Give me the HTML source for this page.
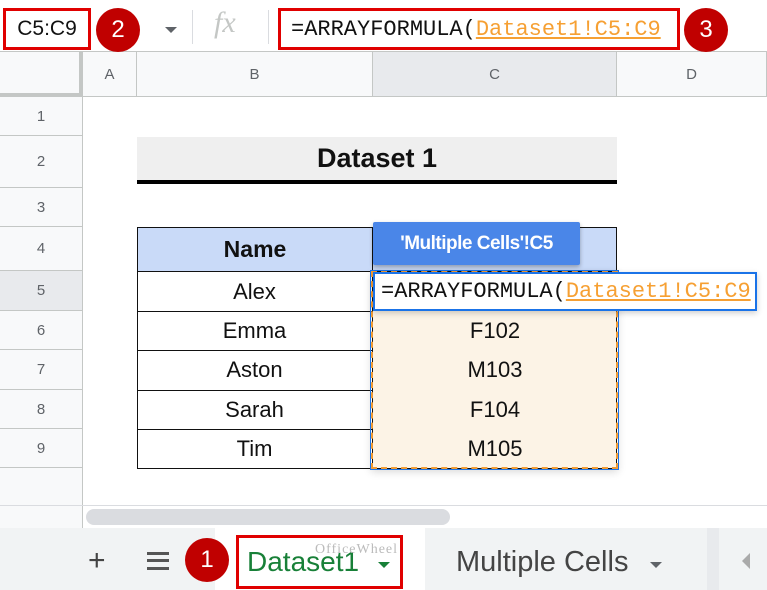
<!DOCTYPE html>
<html><head><style>
*{margin:0;padding:0;box-sizing:border-box}
body{width:767px;height:590px;position:relative;overflow:hidden;background:#fff;font-family:"Liberation Sans",Arial,sans-serif}
.a{position:absolute}
.rh{position:absolute;left:0;width:83px;background:#f8f9fa;border-bottom:1px solid #c4c7c5;border-right:1px solid #c4c7c5;color:#5f6368;font-size:15px;display:flex;align-items:center;justify-content:center}
.ch{position:absolute;top:52px;height:45px;background:#f8f9fa;border-right:1px solid #c4c7c5;border-bottom:1px solid #c4c7c5;color:#5f6368;font-size:15px;display:flex;align-items:center;justify-content:center}
.circ{position:absolute;width:44px;height:44px;border-radius:50%;background:#c00000;color:#fff;font-size:24px;display:flex;align-items:center;justify-content:center}
.cell{position:absolute;display:flex;align-items:center;justify-content:center;font-size:22px;color:#111}
.mono{font-family:"Liberation Mono",monospace}
</style></head><body>
<!-- toolbar -->
<div class="a" style="left:0;top:0;width:767px;height:52px;background:#fff;border-bottom:1px solid #c4c7c5"></div>
<div class="a" style="left:3px;top:8px;width:88px;height:42px;border:3px solid #e00000;font-size:21px;color:#111;display:flex;align-items:center;justify-content:center">C5:C9</div>
<div class="circ" style="left:96px;top:8px">2</div>
<div class="a" style="left:165px;top:27px;width:0;height:0;border-left:6px solid transparent;border-right:6px solid transparent;border-top:6px solid #5f6368"></div>
<div class="a" style="left:192px;top:10px;width:1px;height:34px;background:#dadce0"></div>
<div class="a" style="left:214px;top:6px;font-family:'Liberation Serif',serif;font-style:italic;font-size:30px;color:#c4c7c5">fx</div>
<div class="a" style="left:268px;top:10px;width:1px;height:34px;background:#dadce0"></div>
<div class="a mono" style="left:278px;top:8px;width:402px;height:42px;border:3px solid #e00000;font-size:22px;color:#111;display:flex;align-items:center;padding-left:10px;white-space:nowrap">=ARRAYFORMULA(<span style="color:#f6a033;text-decoration:underline">Dataset1!C5:C9</span></div>
<div class="circ" style="left:684px;top:8px">3</div>
<!-- column headers -->
<div class="a" style="left:0;top:52px;width:83px;height:45px;background:#f8f9fa;border-right:4px solid #c4c7c5;border-bottom:4px solid #c4c7c5"></div>
<div class="ch" style="left:83px;width:54px">A</div>
<div class="ch" style="left:137px;width:236px">B</div>
<div class="ch" style="left:373px;width:244px;background:#e8eaed">C</div>
<div class="ch" style="left:617px;width:150px">D</div>
<!-- row headers -->
<div class="rh" style="top:97px;height:39px">1</div>
<div class="rh" style="top:136px;height:52px">2</div>
<div class="rh" style="top:188px;height:39px">3</div>
<div class="rh" style="top:227px;height:44px">4</div>
<div class="rh" style="top:271px;height:40px;background:#e8eaed">5</div>
<div class="rh" style="top:311px;height:39px">6</div>
<div class="rh" style="top:350px;height:40px">7</div>
<div class="rh" style="top:390px;height:39px">8</div>
<div class="rh" style="top:429px;height:39px">9</div>
<div class="rh" style="top:468px;height:38px"></div>
<div class="a" style="left:0;top:505px;width:767px;height:1px;background:#dadce0"></div>
<div class="a" style="left:0;top:506px;width:83px;height:22px;background:#f8f9fa;border-right:1px solid #c4c7c5"></div>
<div class="a" style="left:86px;top:509px;width:364px;height:16px;border-radius:8px;background:#dadce0"></div>
<!-- title -->
<div class="a" style="left:137px;top:137px;width:480px;height:47px;background:#efefef;border-bottom:4px solid #000;font-weight:bold;font-size:27px;display:flex;align-items:center;justify-content:center;color:#111">Dataset 1</div>
<!-- table -->
<div class="a" style="left:137px;top:227px;width:480px;height:242px;border:1.5px solid #111"></div>
<div class="a" style="left:138px;top:228px;width:478px;height:43px;background:#c9daf8"></div>
<div class="cell" style="left:137px;top:228px;width:236px;height:43px;font-weight:bold;font-size:23px">Name</div>
<div class="a" style="left:372px;top:227px;width:1px;height:242px;background:#111"></div>
<div class="a" style="left:137px;top:271px;width:480px;height:1px;background:#111"></div>
<div class="a" style="left:137px;top:311px;width:480px;height:1px;background:#111"></div>
<div class="a" style="left:137px;top:350px;width:480px;height:1px;background:#111"></div>
<div class="a" style="left:137px;top:390px;width:480px;height:1px;background:#111"></div>
<div class="a" style="left:137px;top:429px;width:480px;height:1px;background:#111"></div>
<div class="a" style="left:373px;top:311px;width:243px;height:157px;background:#fcf3e6"></div>
<div class="cell" style="left:137px;top:272px;width:235px;height:39px">Alex</div>
<div class="cell" style="left:137px;top:311px;width:235px;height:39px">Emma</div>
<div class="cell" style="left:137px;top:350px;width:235px;height:40px">Aston</div>
<div class="cell" style="left:137px;top:390px;width:235px;height:39px">Sarah</div>
<div class="cell" style="left:137px;top:429px;width:235px;height:39px">Tim</div>
<div class="cell" style="left:373px;top:311px;width:244px;height:39px">F102</div>
<div class="cell" style="left:373px;top:350px;width:244px;height:40px">M103</div>
<div class="cell" style="left:373px;top:390px;width:244px;height:39px">F104</div>
<div class="cell" style="left:373px;top:429px;width:244px;height:39px">M105</div>
<div class="a" style="left:371px;top:271px;width:247px;height:198px;border:2px dashed #f39c34;box-shadow:0 0 0 1px #1a73e8,0 3px 8px rgba(0,0,0,.15)"></div>
<!-- tooltip -->
<div class="a" style="left:373px;top:222px;width:207px;height:43px;background:#4a86e8;color:#fff;font-weight:bold;font-size:19px;letter-spacing:-0.5px;display:flex;align-items:center;justify-content:center;box-shadow:0 2px 4px rgba(0,0,0,.3);border-radius:2px;white-space:nowrap">'Multiple Cells'!C5</div>
<!-- edit cell -->
<div class="a mono" style="left:373px;top:272px;width:384px;height:39px;background:#fff;border:2px solid #1a73e8;font-size:22px;color:#111;display:flex;align-items:center;padding-left:6px;white-space:nowrap;overflow:hidden;box-shadow:0 2px 6px rgba(0,0,0,.2)">=ARRAYFORMULA(<span style="color:#f6a033;text-decoration:underline">Dataset1!C5:C9</span></div>
<!-- tabs -->
<div class="a" style="left:0;top:528px;width:767px;height:62px;background:#f1f3f4"></div>
<div class="a" style="left:88px;top:544px;font-size:30px;color:#444">+</div>
<div class="a" style="left:147px;top:552px;width:22px;height:18px;border-top:3px solid #555;border-bottom:3px solid #555"></div>
<div class="a" style="left:147px;top:559px;width:22px;height:3px;background:#555"></div>
<div class="a" style="left:215px;top:528px;width:210px;height:62px;background:#fff"></div>
<div class="circ" style="left:185px;top:538px">1</div>
<div class="a" style="left:236px;top:535px;width:167px;height:54px;border:3px solid #e00000"></div>
<div class="a" style="left:247px;top:546px;font-size:28px;color:#188038">Dataset1</div>
<div class="a" style="left:378px;top:562px;border-left:6px solid transparent;border-right:6px solid transparent;border-top:6px solid #188038"></div>
<div class="a" style="left:315px;top:542px;font-family:'Liberation Serif',serif;font-size:14px;color:#bbb;letter-spacing:1px">OfficeWheel</div>
<div class="a" style="left:456px;top:546px;font-size:29px;color:#444">Multiple Cells</div>
<div class="a" style="left:650px;top:562px;border-left:6px solid transparent;border-right:6px solid transparent;border-top:6px solid #5f6368"></div>
<div class="a" style="left:707px;top:528px;width:12px;height:62px;background:#e8eaed"></div>
<div class="a" style="left:742px;top:553px;border-top:8px solid transparent;border-bottom:8px solid transparent;border-right:8px solid #aaa"></div>
</body></html>
